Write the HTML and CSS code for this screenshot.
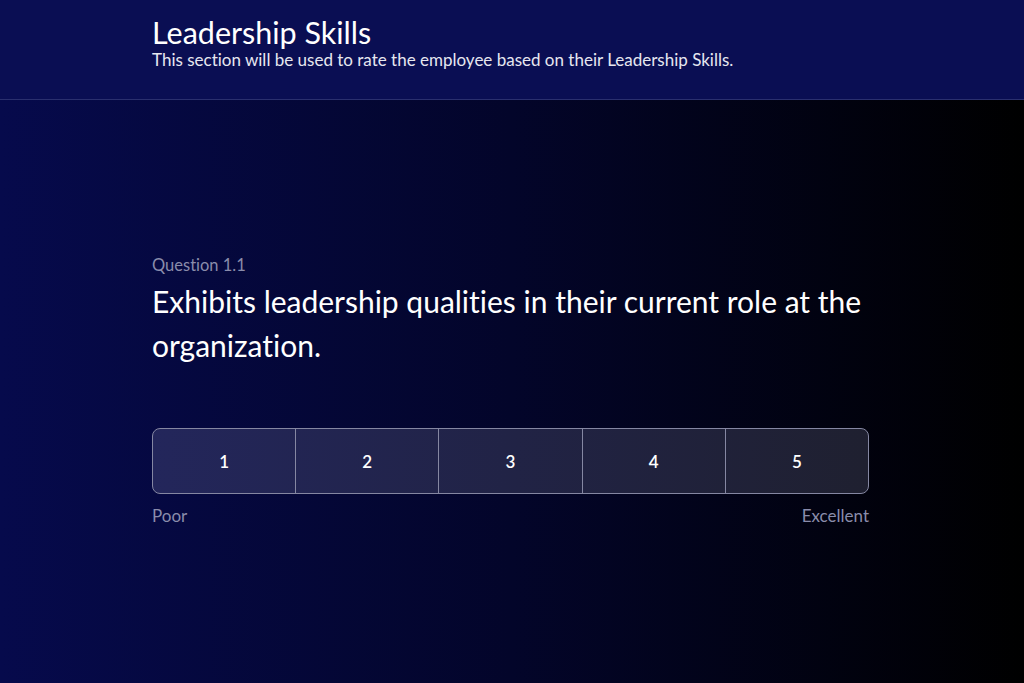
FILE: index.html
```html
<!DOCTYPE html>
<html lang="en">
<head>
    <meta charset="UTF-8">
    <meta name="viewport" content="width=device-width, initial-scale=1.0">
    <title>Leadership Skills</title>
    <link rel="stylesheet" href="styles.css">
</head>
<body>
    <header class="section-header">
        <div class="container">
            <h1>Leadership Skills</h1>
            <p class="section-desc">This section will be used to rate the employee based on their Leadership Skills.</p>
        </div>
    </header>

    <main class="question-area">
        <div class="container">
            <div class="question-label">Question 1.1</div>
            <h2 class="question-text">Exhibits leadership qualities in their current role at the organization.</h2>

            <div class="rating-scale">
                <button class="rating-option">1</button>
                <button class="rating-option">2</button>
                <button class="rating-option">3</button>
                <button class="rating-option">4</button>
                <button class="rating-option">5</button>
            </div>
            <div class="rating-legend">
                <span>Poor</span>
                <span>Excellent</span>
            </div>
        </div>
    </main>
</body>
</html>
```

FILE: styles.css
```css
html, body {
    height: 100%;
}

body {
    margin: 0;
    font-family: Lato, "Noto Sans", sans-serif;
    font-variant-ligatures: none;
    color: #fff;
    background: linear-gradient(to right, #060a4c 0%, #03052a 50%, #000000 100%);
    display: flex;
    flex-direction: column;
}

.container {
    width: 717px;
    margin-left: 152px;
}

.section-header {
    background-color: #0a0e53;
    border-bottom: 1px solid #2a2f6e;
    height: 100px;
    box-sizing: border-box;
    padding-top: 14px;
}

h1 {
    margin: 0;
    font-size: 30.5px;
    font-weight: 400;
    line-height: 36px;
}

.section-desc {
    margin: 0;
    font-size: 17px;
    line-height: 20px;
    color: #e6e7f0;
}

.question-area {
    flex: 1;
    padding-top: 154px;
}

.question-label {
    font-size: 16.5px;
    line-height: 22px;
    color: #8a8cab;
}

.question-text {
    margin: 3px 0 0;
    font-size: 30px;
    font-weight: 400;
    line-height: 44px;
}

.rating-scale {
    display: flex;
    margin-top: 61px;
    height: 66px;
    border: 1px solid #8587a2;
    border-radius: 8px;
    overflow: hidden;
    background: linear-gradient(to right, #23265b, #1f2030);
    box-sizing: border-box;
}

.rating-option {
    flex: 1;
    background: transparent;
    border: none;
    border-left: 1px solid #8587a2;
    color: #fff;
    font-family: inherit;
    font-size: 17px;
    font-weight: 600;
    cursor: pointer;
}

.rating-option:first-child {
    border-left: none;
}

.rating-option:hover {
    background-color: rgba(255, 255, 255, 0.06);
}

.rating-legend {
    display: flex;
    justify-content: space-between;
    margin-top: 11px;
    font-size: 17px;
    color: #8a8cab;
}
```
